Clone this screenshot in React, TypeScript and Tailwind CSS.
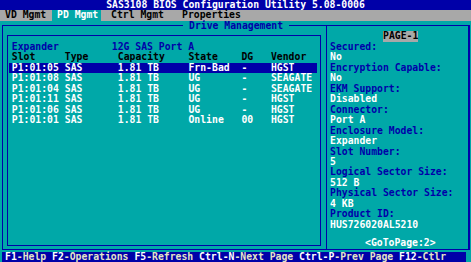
const drives = [
  { slot: 'P1:01:05', type: 'SAS', cap: '1.81 TB', state: 'Frn-Bad', dg: '-', vendor: 'HGST', selected: true },
  { slot: 'P1:01:08', type: 'SAS', cap: '1.81 TB', state: 'UG', dg: '-', vendor: 'SEAGATE' },
  { slot: 'P1:01:04', type: 'SAS', cap: '1.81 TB', state: 'UG', dg: '-', vendor: 'SEAGATE' },
  { slot: 'P1:01:11', type: 'SAS', cap: '1.81 TB', state: 'UG', dg: '-', vendor: 'HGST' },
  { slot: 'P1:01:06', type: 'SAS', cap: '1.81 TB', state: 'UG', dg: '-', vendor: 'HGST' },
  { slot: 'P1:01:01', type: 'SAS', cap: '1.81 TB', state: 'Online', dg: '00', vendor: 'HGST' },
];

const props = [
  ['Secured:', 'No'],
  ['Encryption Capable:', 'No'],
  ['EKM Support:', 'Disabled'],
  ['Connector:', 'Port A'],
  ['Enclosure Model:', 'Expander'],
  ['Slot Number:', '5'],
  ['Logical Sector Size:', '512 B'],
  ['Physical Sector Size:', '4 KB'],
  ['Product ID:', 'HUS726020AL5210'],
];

const keys = [
  ['F1', '-Help'],
  ['F2', '-Operations'],
  ['F5', '-Refresh'],
  ['Ctrl-N', '-Next Page'],
  ['Ctrl-P', '-Prev Page'],
  ['F12', '-Ctlr'],
];

function Row({ children, className = '' }: { children: React.ReactNode; className?: string }) {
  return <div className={`flex h-[10.48px] whitespace-pre ${className}`}>{children}</div>;
}

export default function App() {
  return (
    <div className="w-[471px] h-[262px] overflow-hidden bg-[#00a8a8] flex flex-col font-['DejaVu_Sans_Mono',monospace] font-bold text-[9.78px] leading-[10.48px]">
      {/* title */}
      <Row className="bg-[#0000a8] text-white justify-center">
        SAS3108 BIOS Configuration Utility 5.08-0006
      </Row>

      {/* tabs */}
      <Row className="bg-[#a8a8a8] text-black">
        <span className="w-[52px] pl-[5px]">VD Mgmt</span>
        <span className="w-[49px] pl-[5px] bg-[#00a8a8] text-white">PD Mgmt</span>
        <span className="w-[81px] pl-[10px]">Ctrl Mgmt</span>
        <span>Properties</span>
      </Row>

      {/* main frame */}
      <div className="relative ml-[2px] mt-[4px] w-[468px] h-[225px] border border-r-2 border-[#0000a8] flex">
        <div className="absolute left-[180px] -top-[5px] h-[10.48px] bg-[#00a8a8] text-[#0000a8] px-[6px] whitespace-pre">
          Drive Management
        </div>

        {/* drive list */}
        <div className="w-[323px] flex">
          <div className="ml-[4px] mr-[5px] mt-[9px] mb-[3px] flex-1 border border-[#0000a8] pt-[5.92px]">
            <Row className="pl-[3.8px] text-[#0000a8]">
              <span className="w-[100px]">Expander</span>
              <span>12G SAS Port A</span>
            </Row>
            <Row className="pl-[3.8px] text-black">
              <span className="w-[53px]">Slot</span>
              <span className="w-[53px]">Type</span>
              <span className="w-[70.7px]">Capacity</span>
              <span className="w-[53px]">State</span>
              <span className="w-[29.5px]">DG</span>
              <span>Vendor</span>
            </Row>
            {drives.map((d) => (
              <Row
                key={d.slot}
                className={`ml-[1px] mr-[3px] pl-[2.8px] text-white ${d.selected ? 'bg-[#0000a8]' : ''}`}
              >
                <span className="w-[53px]">{d.slot}</span>
                <span className="w-[53px]">{d.type}</span>
                <span className="w-[70.7px]">{d.cap}</span>
                <span className="w-[53px]">{d.state}</span>
                <span className="w-[29.5px]">{d.dg}</span>
                <span>{d.vendor}</span>
              </Row>
            ))}
          </div>
        </div>

        {/* properties panel */}
        <div className="flex-1 border-l border-[#0000a8] flex flex-col pt-[5.44px] pl-[3px]">
          <Row className="pl-[53px]">
            <span className="bg-[#a8a8a8] text-black">PAGE-1</span>
          </Row>
          {props.map(([label, value]) => (
            <div key={label}>
              <Row className="text-[#0000a8]">{label}</Row>
              <Row className="text-white">{value}</Row>
            </div>
          ))}
          <Row className="mt-auto pl-[35px] text-white">&lt;GoToPage:2&gt;</Row>
        </div>
      </div>

      {/* help bar */}
      <Row className="mt-auto ml-[2px] w-[464px] bg-[#0000a8] pl-[3px]">
        {keys.map(([k, d], i) => (
          <span key={k}>
            <span className="text-white">{k}</span>
            <span className="text-[#e4e4c8]">{d}</span>
            {i < keys.length - 1 ? ' ' : ''}
          </span>
        ))}
      </Row>
    </div>
  );
}
